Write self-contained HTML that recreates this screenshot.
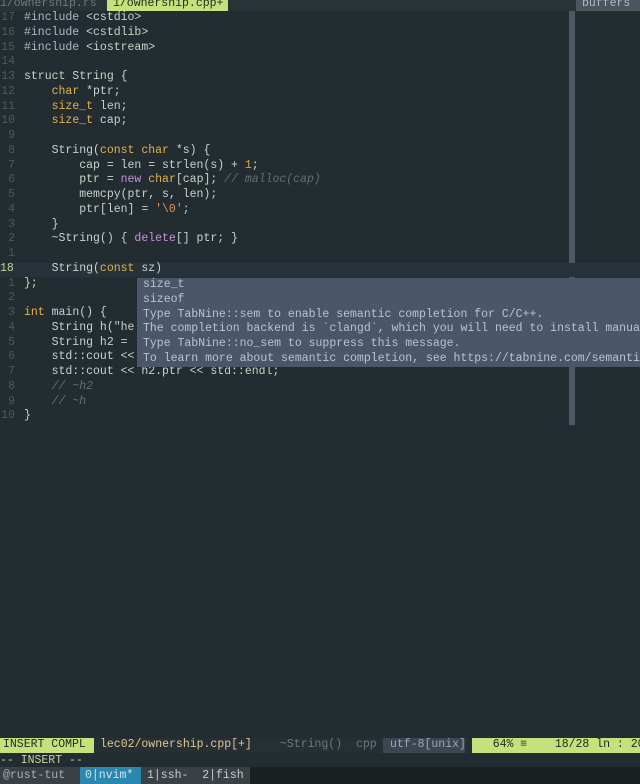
<!DOCTYPE html>
<html><head><meta charset="utf-8"><style>
*{margin:0;padding:0}
body{width:640px;height:784px;overflow:hidden;background:#232d31;font-family:"Liberation Mono",monospace;font-size:11.5px;color:#c9d1c8;position:relative}
.r{position:absolute;left:0;height:14.75px;line-height:14.75px;white-space:nowrap;width:640px}
.r span{white-space:pre}
.n{position:absolute;left:0;width:15px;text-align:right;color:#4a5a55}
.c{position:absolute;left:24px}
.k{color:#e0b050}.p{color:#c890d8}.i{color:#a8b8c8}.cm{color:#5d6f78;font-style:italic}.o{color:#e8a030}.s{color:#d89a60}
.pop{position:absolute;left:137px;top:278px;width:503px;height:89px;background:#4b5668;color:#b8c4d4}
.pop div{height:14.75px;line-height:14.75px;padding-left:6px;white-space:pre}
</style></head><body>
<div class="r" style="top:-3px;height:14px;line-height:14px;background:#2a3437"><span style="position:absolute;left:0;color:#6a7880">1/ownership.rs</span><span style="position:absolute;left:107px;width:115px;background:#c6e07c;color:#1e2a20;padding-left:6px">1/ownership.cpp+</span><span style="position:absolute;left:576px;width:58px;background:#4a5560;color:#b0bcc8;padding-left:6px">buffers</span></div>
<div style="position:absolute;left:569px;top:11px;width:6px;height:414px;background:#4d5a64"></div>
<div class="r" style="top:262.6px;background:#27333a"></div>

<div class="r" style="top:11px"><span class="n">17</span><span class="c"><span class="i">#include</span> &lt;cstdio&gt;</span></div>
<div class="r" style="top:25.75px"><span class="n">16</span><span class="c"><span class="i">#include</span> &lt;cstdlib&gt;</span></div>
<div class="r" style="top:40.5px"><span class="n">15</span><span class="c"><span class="i">#include</span> &lt;iostream&gt;</span></div>
<div class="r" style="top:55.25px"><span class="n">14</span></div>
<div class="r" style="top:70px"><span class="n">13</span><span class="c">struct String {</span></div>
<div class="r" style="top:84.75px"><span class="n">12</span><span class="c">    <span class="k">char</span> *ptr;</span></div>
<div class="r" style="top:99.5px"><span class="n">11</span><span class="c">    <span class="k">size_t</span> len;</span></div>
<div class="r" style="top:114.25px"><span class="n">10</span><span class="c">    <span class="k">size_t</span> cap;</span></div>
<div class="r" style="top:129px"><span class="n">9</span></div>
<div class="r" style="top:143.75px"><span class="n">8</span><span class="c">    String(<span class="k">const char</span> *s) {</span></div>
<div class="r" style="top:158.5px"><span class="n">7</span><span class="c">        cap = len = strlen(s) + <span class="o">1</span>;</span></div>
<div class="r" style="top:173.25px"><span class="n">6</span><span class="c">        ptr = <span class="p">new</span> <span class="k">char</span>[cap]; <span class="cm">// malloc(cap)</span></span></div>
<div class="r" style="top:188px"><span class="n">5</span><span class="c">        memcpy(ptr, s, len);</span></div>
<div class="r" style="top:202.75px"><span class="n">4</span><span class="c">        ptr[len] = <span class="s">'\0'</span>;</span></div>
<div class="r" style="top:217.5px"><span class="n">3</span><span class="c">    }</span></div>
<div class="r" style="top:232.25px"><span class="n">2</span><span class="c">    ~String() { <span class="p">delete</span>[] ptr; }</span></div>
<div class="r" style="top:247px"><span class="n">1</span></div>
<div class="r" style="top:261.75px"><span class="n" style="color:#c6d0a0;text-align:left">18</span><span class="c">    String(<span class="k">const</span> sz)</span></div>
<div class="r" style="top:276.5px"><span class="n">1</span><span class="c">};</span></div>
<div class="r" style="top:291.25px"><span class="n">2</span></div>
<div class="r" style="top:306px"><span class="n">3</span><span class="c"><span class="k">int</span> main() {</span></div>
<div class="r" style="top:320.75px"><span class="n">4</span><span class="c">    String h("he</span></div>
<div class="r" style="top:335.5px"><span class="n">5</span><span class="c">    String h2 =</span></div>
<div class="r" style="top:350.25px"><span class="n">6</span><span class="c">    std::cout &lt;&lt;</span></div>
<div class="r" style="top:365px"><span class="n">7</span><span class="c">    std::cout &lt;&lt; h2.ptr &lt;&lt; std::endl;</span></div>
<div class="r" style="top:379.75px"><span class="n">8</span><span class="c">    <span class="cm">// ~h2</span></span></div>
<div class="r" style="top:394.5px"><span class="n">9</span><span class="c">    <span class="cm">// ~h</span></span></div>
<div class="r" style="top:409.25px"><span class="n">10</span><span class="c">}</span></div>

<div class="pop">
<div>size_t</div><div>sizeof</div>
<div>Type TabNine::sem to enable semantic completion for C/C++.</div>
<div>The completion backend is `clangd`, which you will need to install manually.</div>
<div>Type TabNine::no_sem to suppress this message.</div>
<div>To learn more about semantic completion, see https://tabnine.com/semantic</div>
</div>

<div class="r" style="top:738px;background:#263034"><span style="position:absolute;left:0;width:91px;background:#c6e07c;color:#1e2a20;padding-left:3px">INSERT COMPL</span><span style="position:absolute;left:100px;color:#e0c890">lec02/ownership.cpp[+]</span><span style="position:absolute;left:280px;color:#6a7880">~String()</span><span style="position:absolute;left:356px;color:#6a7880">cpp</span><span style="position:absolute;left:383px;width:75px;background:#3d4552;color:#9aa8b8;padding-left:7px">utf-8[unix]</span><span style="position:absolute;left:472px;width:168px;background:#c6e07c;color:#1e2a20">   64% ≡    18/28 ln : 20</span></div>
<div class="r" style="top:754px;color:#c6d0a0">-- INSERT --</div>
<div class="r" style="top:767px;height:17px;line-height:17px;background:#1a1f22"><span style="position:absolute;left:0;width:250px;height:17px;background:#3a4044"></span><span style="position:absolute;left:3px;color:#a8b0b4">@rust-tut</span><span style="position:absolute;left:80px;width:56px;background:#2a88b0;color:#cfe4ee;padding-left:5px">0|nvim*</span><span style="position:absolute;left:147px;color:#c8ccd0">1|ssh-  2|fish</span></div>
</body></html>
